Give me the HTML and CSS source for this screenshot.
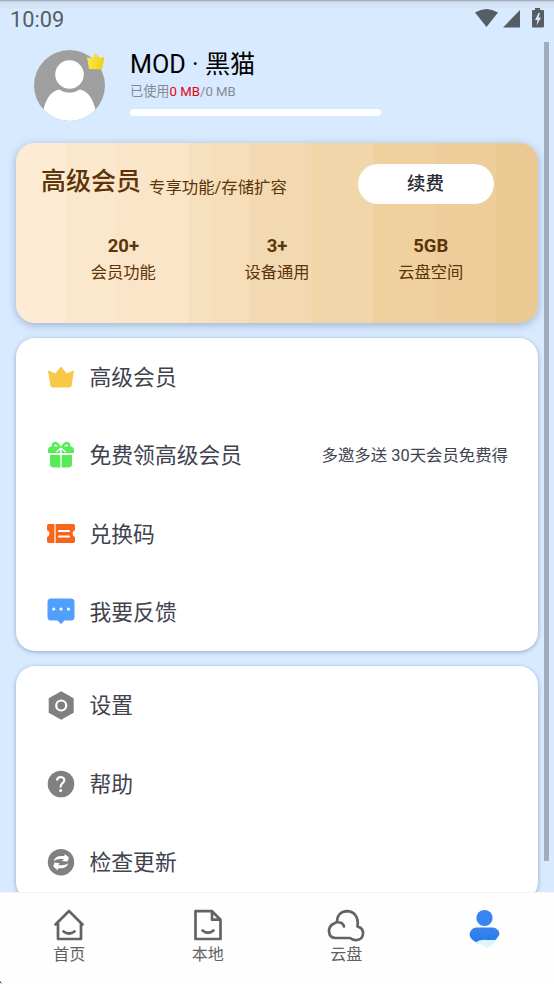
FILE: index.html
```html
<!DOCTYPE html>
<html lang="zh-CN">
<head>
<meta charset="utf-8">
<title>我的</title>
<link rel="stylesheet" href="styles.css">
</head>
<body>
<div class="screen">
  <header class="status">
    <span class="time">10:09</span>
    <svg class="signals" width="72" height="22" viewBox="0 0 72 22">
      <path d="M1 4.500Q12.500-2.500 24 4.500L12.500 19Z"/>
      <path d="M29 19.500L46 2V19.500Z"/>
      <path fill-rule="evenodd" d="M61 0h5v2h3q1 0 1 1v15.500q0 1-1 1h-10q-1 0-1-1V3q0-1 1-1h2zM64.500 5L61 12h2.500l-1 5.500L67 9.500h-2.500L66 5z"/>
    </svg>
  </header>

  <main class="content">
    <section class="profile">
      <div class="avatar">
        <svg width="71" height="71" viewBox="0 0 71 71">
          <defs><clipPath id="disc"><circle cx="35.500" cy="35.500" r="35.500"/></clipPath></defs>
          <g clip-path="url(#disc)">
            <rect width="71" height="71" fill="#9f9f9f"/>
            <path d="M25 39.500Q35.500 46 46 39.500C54 41 60 50 62 62V71H9V62C11 50 17 41 25 39.500Z" fill="#fff"/>
            <circle cx="35.500" cy="24.500" r="14.300" fill="#fff"/>
          </g>
        </svg>
        <svg class="badge" width="18" height="17" viewBox="0 0 18 17">
          <defs><linearGradient id="gold"><stop stop-color="#fae84b"/><stop offset="1" stop-color="#ecd015"/></linearGradient></defs>
          <path d="M0 4L5 5.500L8.500 0L12.500 5L17.500 4L15 16.500L2 16Z" fill="url(#gold)"/>
        </svg>
      </div>
      <div class="account">
        <h1>MOD · 黑猫</h1>
        <p class="usage">已使用<b>0 MB</b>/0 MB</p>
        <div class="meter"></div>
      </div>
    </section>

    <section class="vip">
      <div class="vip-head">
        <h2>高级会员</h2>
        <span class="vip-sub">专享功能/存储扩容</span>
        <button class="renew">续费</button>
      </div>
      <div class="perks">
        <div><strong>20+</strong><span>会员功能</span></div>
        <div><strong>3+</strong><span>设备通用</span></div>
        <div><strong>5GB</strong><span>云盘空间</span></div>
      </div>
    </section>

    <section class="card">
      <div class="row">
        <svg width="30" height="30" viewBox="0 0 30 30"><path d="M2.500 9L9.500 12L15 5L20.500 12L27.500 9L25 24Q24.800 25 24 25H6Q5.200 25 5 24Z" fill="#f8c846" stroke="#f8c846" stroke-linejoin="round"/></svg>
        <span>高级会员</span>
      </div>
      <div class="row">
        <svg width="30" height="30" viewBox="0 0 30 30">
          <g fill="none" stroke="#57ec55" stroke-width="2.600"><path d="M14 8C11 1 6 2 7 7M16 8C19 1 24 2 23 7"/></g>
          <path d="M5 6.500H25Q28 7 28 10V13H2V10Q2 7 5 6.500ZM4 15H26V24Q26 27.500 22.500 27.500H7.500Q4 27.500 4 24Z" fill="#57ec55"/>
          <path d="M15 8V28M15 8L10.500 12M15 8L19.500 12" stroke="#fff" stroke-width="1.400" fill="none"/>
        </svg>
        <span>免费领高级会员</span>
        <span class="note">多邀多送 30天会员免费得</span>
      </div>
      <div class="row">
        <svg width="30" height="30" viewBox="0 0 30 30">
          <path d="M3 5H27Q29 5 29 7V11Q26.500 12 26.500 14.500T29 18V22Q29 24 27 24H3Q1 24 1 22V18Q3.500 17 3.500 14.500T1 11V7Q1 5 3 5Z" fill="#f7651b"/>
          <path d="M9 5V24" stroke="#fff" stroke-width="1.200"/>
          <path d="M13 12H23M13 17.500H23" stroke="#fff" stroke-width="2" stroke-linecap="round"/>
        </svg>
        <span>兑换码</span>
      </div>
      <div class="row">
        <svg width="30" height="30" viewBox="0 0 30 30"><path d="M5 1.500H25Q28.500 1.500 28.500 5V20Q28.500 23.500 25 23.500H18.500L15 27L11.500 23.500H5Q1.500 23.500 1.500 20V5Q1.500 1.500 5 1.500Z" fill="#509ffc"/><g fill="#fff"><circle cx="7.700" cy="12" r="1.600"/><circle cx="15" cy="12" r="1.600"/><circle cx="22.500" cy="12" r="1.600"/></g></svg>
        <span>我要反馈</span>
      </div>
    </section>

    <section class="card">
      <div class="row">
        <svg width="30" height="30" viewBox="0 0 30 30"><path d="M15.200 1.200L27.700 8.200V22.700L15.200 29.700L2.700 22.700V8.200Z" fill="#808080"/><circle cx="15.200" cy="15.500" r="5" fill="none" stroke="#fff" stroke-width="2.200"/></svg>
        <span>设置</span>
      </div>
      <div class="row">
        <svg width="30" height="30" viewBox="0 0 30 30"><circle cx="15" cy="15" r="13.300" fill="#808080"/><path d="M11 11.500Q11.300 8 14.700 8Q18.500 8.300 18.300 11.500Q18 13.300 16 14.600Q14.600 15.700 14.600 18.500" fill="none" stroke="#fff" stroke-width="2.100"/><circle cx="14.600" cy="21.600" r="1.500" fill="#fff"/></svg>
        <span>帮助</span>
      </div>
      <div class="row">
        <svg width="30" height="30" viewBox="0 0 30 30"><circle cx="15" cy="15.200" r="13.200" fill="#808080"/><g fill="#fff"><path d="M7.500 14Q9.500 9 15 9H18.500V7L23 10.500L21.500 14.500L16 14L18 12H14Q10.500 12 7.500 14Z"/><path d="M22.500 16.200Q20.500 21.200 15 21.200H12V23.500L7.200 19.500L8.500 15.500L14 16.500L12 18.200H16Q19.500 18.200 22.500 16.200Z"/></g></svg>
        <span>检查更新</span>
      </div>
    </section>
    <div class="scrollbar"></div>
  </main>

  <nav class="tabs">
    <div class="tab">
      <svg width="40" height="34" viewBox="0 0 40 34"><path d="M6.500 15.500L20 2L33.500 15.500M9 14V30H32V14M14.500 22.500Q20 26.500 25.500 22.500"/></svg>
      <span>首页</span>
    </div>
    <div class="tab">
      <svg width="40" height="34" viewBox="0 0 40 34"><path d="M7.500 2.200H24L32.500 10.700V30H7.500ZM24 2.200V10.700H32.500M14.500 21.500Q20 26 25.500 21.500"/></svg>
      <span>本地</span>
    </div>
    <div class="tab">
      <svg width="40" height="34" viewBox="0 0 40 34"><path d="M18 17.500C17 13.500 12 12 8 14.500C1 17.500 1.500 28.500 9 29H24C29 33 36.500 31 37 25C37.500 21 35 18.500 31.500 17.500C33 8 28 2.200 21 2.200C15 2.500 11 6.500 11 13"/></svg>
      <span>云盘</span>
    </div>
    <div class="tab">
      <svg width="40" height="40" viewBox="0 0 40 40">
        <defs>
          <linearGradient id="body" x2="0" y2="1"><stop stop-color="#3c84ee"/><stop offset="1" stop-color="#237be8"/></linearGradient>
        </defs>
        <circle cx="19.500" cy="9" r="8.100" fill="#3585f3"/>
        <path class="solid" d="M11 18.500H28Q34 19.500 34.500 25Q33 30 26 34H14Q6 32 4.500 26Q5 19.500 11 18.500Z" fill="url(#body)"/>
        <path class="solid" d="M10 34Q15 30 21 31L31 31L34 26Q32 34 22 39Q19 36 10 34Z" fill="#dcf5ff"/>
      </svg>
    </div>
    <i class="corner"></i>
  </nav>
</div>
</body>
</html>
```
FILE: styles.css
```css
* { box-sizing: border-box; }
body, h1, h2, p { margin: 0; }
body {
  width: 554px;
  height: 984px;
  overflow: hidden;
  font-family: Roboto, "Noto Sans CJK SC", sans-serif;
  color: #40434e;
}
svg { display: block; flex: none; }
.screen {
  display: flex;
  flex-direction: column;
  height: 984px;
  background: #d8eaff;
}
.status {
  display: flex;
  justify-content: space-between;
  align-items: flex-start;
  height: 42px;
  padding: 8px 8px 0 10px;
  background: linear-gradient(#929dac 0, #c4d2e4 1.500px, #d3e2f4 3px, #d5e5f8 8px, #d8eaff 9px);
}
.time { font-size: 21.800px; line-height: 23px; color: #565d65; }
.signals { fill: #565d65; }
.content {
  position: relative;
  flex: 1;
  min-height: 0;
  padding: 0 16px;
  overflow: hidden;
}
.profile { display: flex; height: 101px; padding: 8px 18px 0; }
.avatar { position: relative; width: 71px; height: 71px; margin-right: 25px; }
.badge { position: absolute; left: 53px; top: 3px; }
.account { width: 251px; }
h1 { font-size: 25.200px; line-height: 29px; font-weight: 400; color: #000; white-space: nowrap; }
.usage { margin-top: 4px; font-size: 13.200px; line-height: 17px; color: #858b93; }
.usage b { color: #e70012; font-weight: 400; }
.meter { height: 7px; margin-top: 9px; border-radius: 4px; background: #fff; }
.vip {
  height: 180px;
  padding: 20px 0 0 25px;
  border-radius: 19px;
  color: #5c3409;
  background: linear-gradient(90deg, #fdecd3 0 49px, #fbe7cb 49px 100px, #fae5c8 100px 173px, #f7e0bd 173px 196px, #f6deb9 196px 234px, #f3d9b1 234px 295px, #f1d6aa 295px 357px, #efd1a0 357px 420px, #edcd99 420px 480px, #eac992 480px);
  box-shadow: 0 2px 9px rgba(58, 83, 119, .38);
}
.vip-head { display: flex; align-items: center; height: 41px; }
h2 { font-size: 25px; line-height: 34px; font-weight: 500; margin-top: -3px; white-space: nowrap; }
.vip-sub { width: 208.500px; margin-left: 8px; margin-top: 8px; font-size: 16.400px; line-height: 24px; }
.renew {
  width: 136px;
  height: 40px;
  padding: 0;
  border: 0;
  border-radius: 20px;
  background: #fff;
  color: #292c31;
  font: 500 18.500px/40px Roboto, "Noto Sans CJK SC", sans-serif;
}
.perks { display: grid; grid-template-columns: repeat(3, 153.700px); margin: 29px 0 0 5.500px; }
.perks div { display: flex; flex-direction: column; align-items: center; }
.perks strong { font-size: 18.500px; line-height: 26px; font-weight: 700; }
.perks span { font-size: 16.300px; line-height: 28px; }
.card {
  margin-top: 15px;
  border-radius: 19px;
  background: #fff;
  box-shadow: 0 1px 4px rgba(50, 75, 110, .42);
}
.row { display: flex; align-items: center; height: 78.300px; padding: 0 30px; font-size: 21.800px; line-height: 30px; }
.row svg { margin-right: 13.500px; }
.row span { padding-top: 2px; }
.row .note { margin-left: auto; font-size: 16.400px; }
.scrollbar { position: absolute; right: 5px; top: 0; width: 5px; height: 819px; background: #a2adbb; }
.tabs {
  position: relative;
  display: grid;
  grid-template-columns: repeat(4, 138.500px);
  height: 92px;
  padding-top: 16px;
  border-top: 1px solid #f4f4f4;
  background: #fefefe;
}
.tab { display: flex; flex-direction: column; align-items: center; font-size: 16px; line-height: 23px; color: #626262; }
.tab path { fill: none; stroke: #636363; stroke-width: 2.700px; stroke-linejoin: round; stroke-linecap: round; }
.tab path.solid { stroke: none; }
.tab path.solid:nth-of-type(1) { fill: url(#body); }
.tab path.solid:nth-of-type(2) { fill: #dcf5ff; }
.corner { position: absolute; left: 0; bottom: 0; width: 2px; height: 3px; background: #111; clip-path: polygon(0 0, 100% 100%, 0 50%); }
```
